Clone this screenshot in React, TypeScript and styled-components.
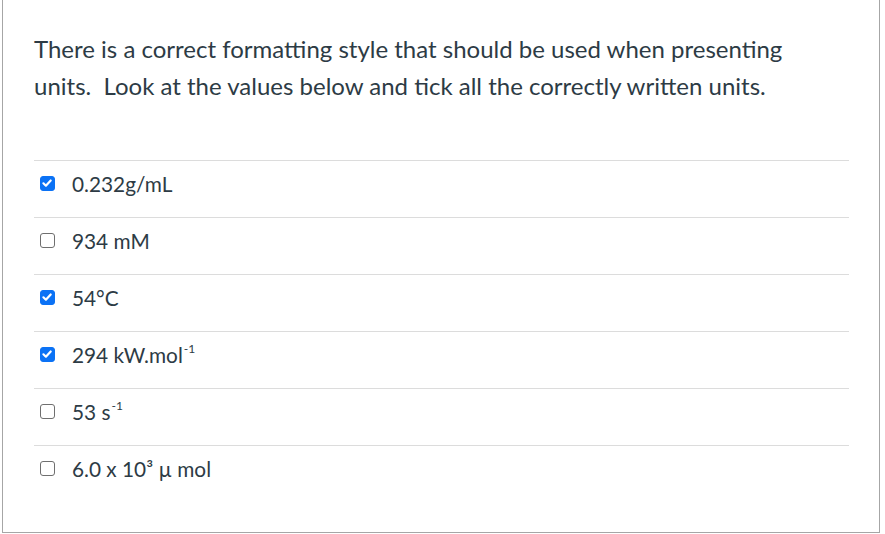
import React from "react";
import styled, { createGlobalStyle } from "styled-components";

const Global = createGlobalStyle`
  html, body { margin: 0; padding: 0; background: #ffffff; }
  body { font-family: Lato, "Noto Sans", sans-serif; color: #2d3b45; }
`;

const Frame = styled.div`
  box-sizing: border-box;
  margin-left: 2px;
  width: 878px;
  border: 1px solid #a6a6a6;
  border-top: none;
  padding: 30px 30px 30px 31px;
  background: #fff;
`;

const Question = styled.p`
  margin: 0;
  font-size: 24px;
  line-height: 37px;
  color: #2d3b45;
`;

const Answers = styled.div`
  margin-top: 56px;
  display: flex;
  flex-direction: column;
`;

const Row = styled.label`
  display: flex;
  align-items: center;
  border-top: 1px solid #dcdcdc;
  padding: 8px 0 18px 0;
  height: 30px;
  font-size: 20.8px;
  line-height: 30px;
`;

const Box = styled.span<{ $checked: boolean }>`
  box-sizing: border-box;
  display: block;
  width: 15px;
  height: 15px;
  margin: 0 17px 0 6px;
  flex: 0 0 15px;
  border-radius: 3px;
  border: 1.5px solid ${(p) => (p.$checked ? "#0b72f5" : "#6f6f6f")};
  background: ${(p) => (p.$checked ? "#0b72f5" : "#fff")};
  position: relative;
  top: -1px;
`;

const Tick = styled.svg`
  position: absolute;
  left: 0;
  top: 0;
  width: 12px;
  height: 12px;
`;

const Sup = styled.sup`
  font-size: 12px;
  line-height: 0;
  vertical-align: baseline;
  position: relative;
  top: -0.85em;
  margin-left: 1px;
`;

const items: { checked: boolean; content: React.ReactNode }[] = [
  { checked: true, content: <>0.232g/mL</> },
  { checked: false, content: <>934 mM</> },
  { checked: true, content: <>54°C</> },
  { checked: true, content: <>294 kW.mol<Sup>-1</Sup></> },
  { checked: false, content: <>53 s<Sup>-1</Sup></> },
  { checked: false, content: <>6.0 x 10³ µ mol</> },
];

export default function App() {
  return (
    <>
      <Global />
      <Frame>
        <Question>
          There is a correct formatting style that should be used when presenting units.&nbsp; Look at the values below and tick all the correctly written units.
        </Question>
        <Answers>
          {items.map((it, i) => (
            <Row key={i}>
              <Box $checked={it.checked}>
                {it.checked && (
                  <Tick viewBox="0 0 12 12">
                    <path d="M2.4 6.3 L4.9 8.7 L9.7 3.5" fill="none" stroke="#fff" strokeWidth="2.2" strokeLinecap="round" strokeLinejoin="round" />
                  </Tick>
                )}
              </Box>
              <span>{it.content}</span>
            </Row>
          ))}
        </Answers>
      </Frame>
    </>
  );
}
